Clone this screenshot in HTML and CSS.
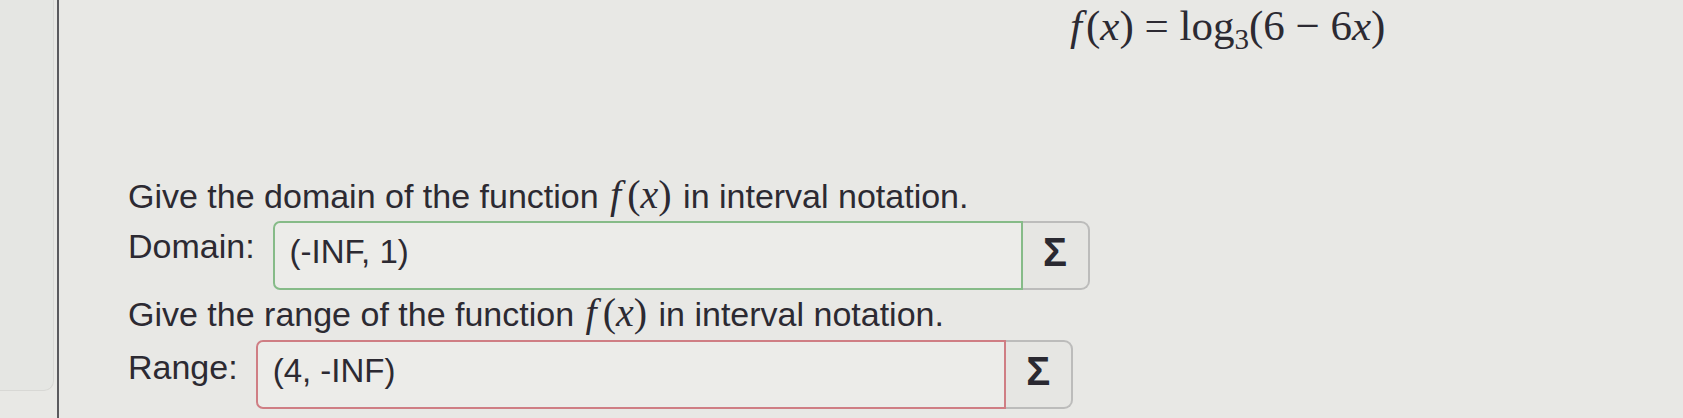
FILE: index.html
```html
<!DOCTYPE html>
<html lang="en">
  <head>
    <meta charset="UTF-8" />
    <meta name="viewport" content="width=device-width, initial-scale=1.0" />
    <title>Domain and Range</title>
    <link rel="stylesheet" href="styles.css">
  </head>
  <body>
    <div class="page">
      <aside class="sidebar"></aside>
      <main class="content">
        <div class="formula">
          <i class="fn">f</i>(<i>x</i>) = log<sub>3</sub>(6 − 6<i>x</i>)
        </div>

        <p class="question">
          Give the domain of the function <span class="math"><i class="fn">f</i>(<i>x</i>)</span> in interval notation.
        </p>
        <div class="answer-row domain">
          <label class="answer-label" for="domain">Domain:</label>
          <div class="answer-box correct">
            <input class="answer-input" id="domain" type="text" value="(-INF, 1)">
            <button class="sigma-button" type="button">Σ</button>
          </div>
        </div>

        <p class="question">
          Give the range of the function <span class="math"><i class="fn">f</i>(<i>x</i>)</span> in interval notation.
        </p>
        <div class="answer-row range">
          <label class="answer-label" for="range">Range:</label>
          <div class="answer-box incorrect">
            <input class="answer-input" id="range" type="text" value="(4, -INF)">
            <button class="sigma-button" type="button">Σ</button>
          </div>
        </div>
      </main>
    </div>
  </body>
</html>
```

FILE: styles.css
```css
:root {
  --page-bg: #e8e8e5;
  --sidebar-bg: #e5e6e3;
  --text-color: #2c2a32;
  --correct-color: #86bb88;
  --incorrect-color: #cf7e84;
  --button-border: #bcbcbb;
}

* {
  box-sizing: border-box;
  margin: 0;
  padding: 0;
}

body {
  background-color: var(--page-bg);
  color: var(--text-color);
  font-family: "Liberation Sans", Arial, sans-serif;
  height: 418px;
  overflow: hidden;
}

.page {
  display: flex;
  height: 100%;
}

.sidebar {
  width: 59px;
  flex-shrink: 0;
  border-right: 2px solid #5a5a5e;
  position: relative;
}

.sidebar::before {
  content: "";
  position: absolute;
  top: 0;
  left: 0;
  right: 3px;
  height: 390px;
  background-color: var(--sidebar-bg);
  border-bottom-right-radius: 10px;
  border-right: 1px solid #d8d8d5;
  border-bottom: 1px solid #d8d8d5;
}

.content {
  flex: 1;
  padding-left: 69px;
}

.formula {
  font-family: "Liberation Serif", "Times New Roman", serif;
  font-size: 43px;
  line-height: 43px;
  padding-top: 4px;
  padding-left: 942px;
  white-space: nowrap;
}

.formula sub {
  font-size: 29px;
  line-height: 0;
  vertical-align: -9px;
}

.fn {
  margin-right: 4px;
}

.question {
  font-size: 34px;
  line-height: 38px;
  white-space: nowrap;
}

.formula + .question {
  margin-top: 130px;
}

.math {
  font-family: "Liberation Serif", "Times New Roman", serif;
  font-size: 40px;
  line-height: 0;
  padding-left: 2px;
  padding-right: 2px;
}

.math .fn {
  margin-right: 6px;
}

.answer-row {
  display: flex;
  align-items: flex-start;
}

.answer-row.domain {
  margin-top: 6px;
  margin-bottom: 5px;
}

.answer-row.range {
  margin-top: 7px;
}

.answer-label {
  font-size: 34px;
  line-height: 38px;
  padding-top: 6px;
  margin-right: 18px;
}

.range .answer-label {
  padding-top: 8px;
}

.answer-box {
  display: flex;
  height: 69px;
}

.answer-input {
  width: 750px;
  height: 100%;
  border: 2px solid var(--correct-color);
  border-radius: 7px 0 0 7px;
  background-color: #ecece9;
  color: var(--text-color);
  font-family: "Liberation Sans", Arial, sans-serif;
  font-size: 33px;
  padding: 0 15px 8px;
  outline: none;
}

.incorrect .answer-input {
  border-color: var(--incorrect-color);
}

.sigma-button {
  width: 67px;
  height: 100%;
  border: 2px solid var(--button-border);
  border-left: none;
  border-radius: 0 9px 9px 0;
  background-color: #e6e6e3;
  color: #2a2931;
  font-family: "Liberation Sans", Arial, sans-serif;
  font-size: 40px;
  font-weight: bold;
  padding-bottom: 6px;
  cursor: pointer;
}
```
